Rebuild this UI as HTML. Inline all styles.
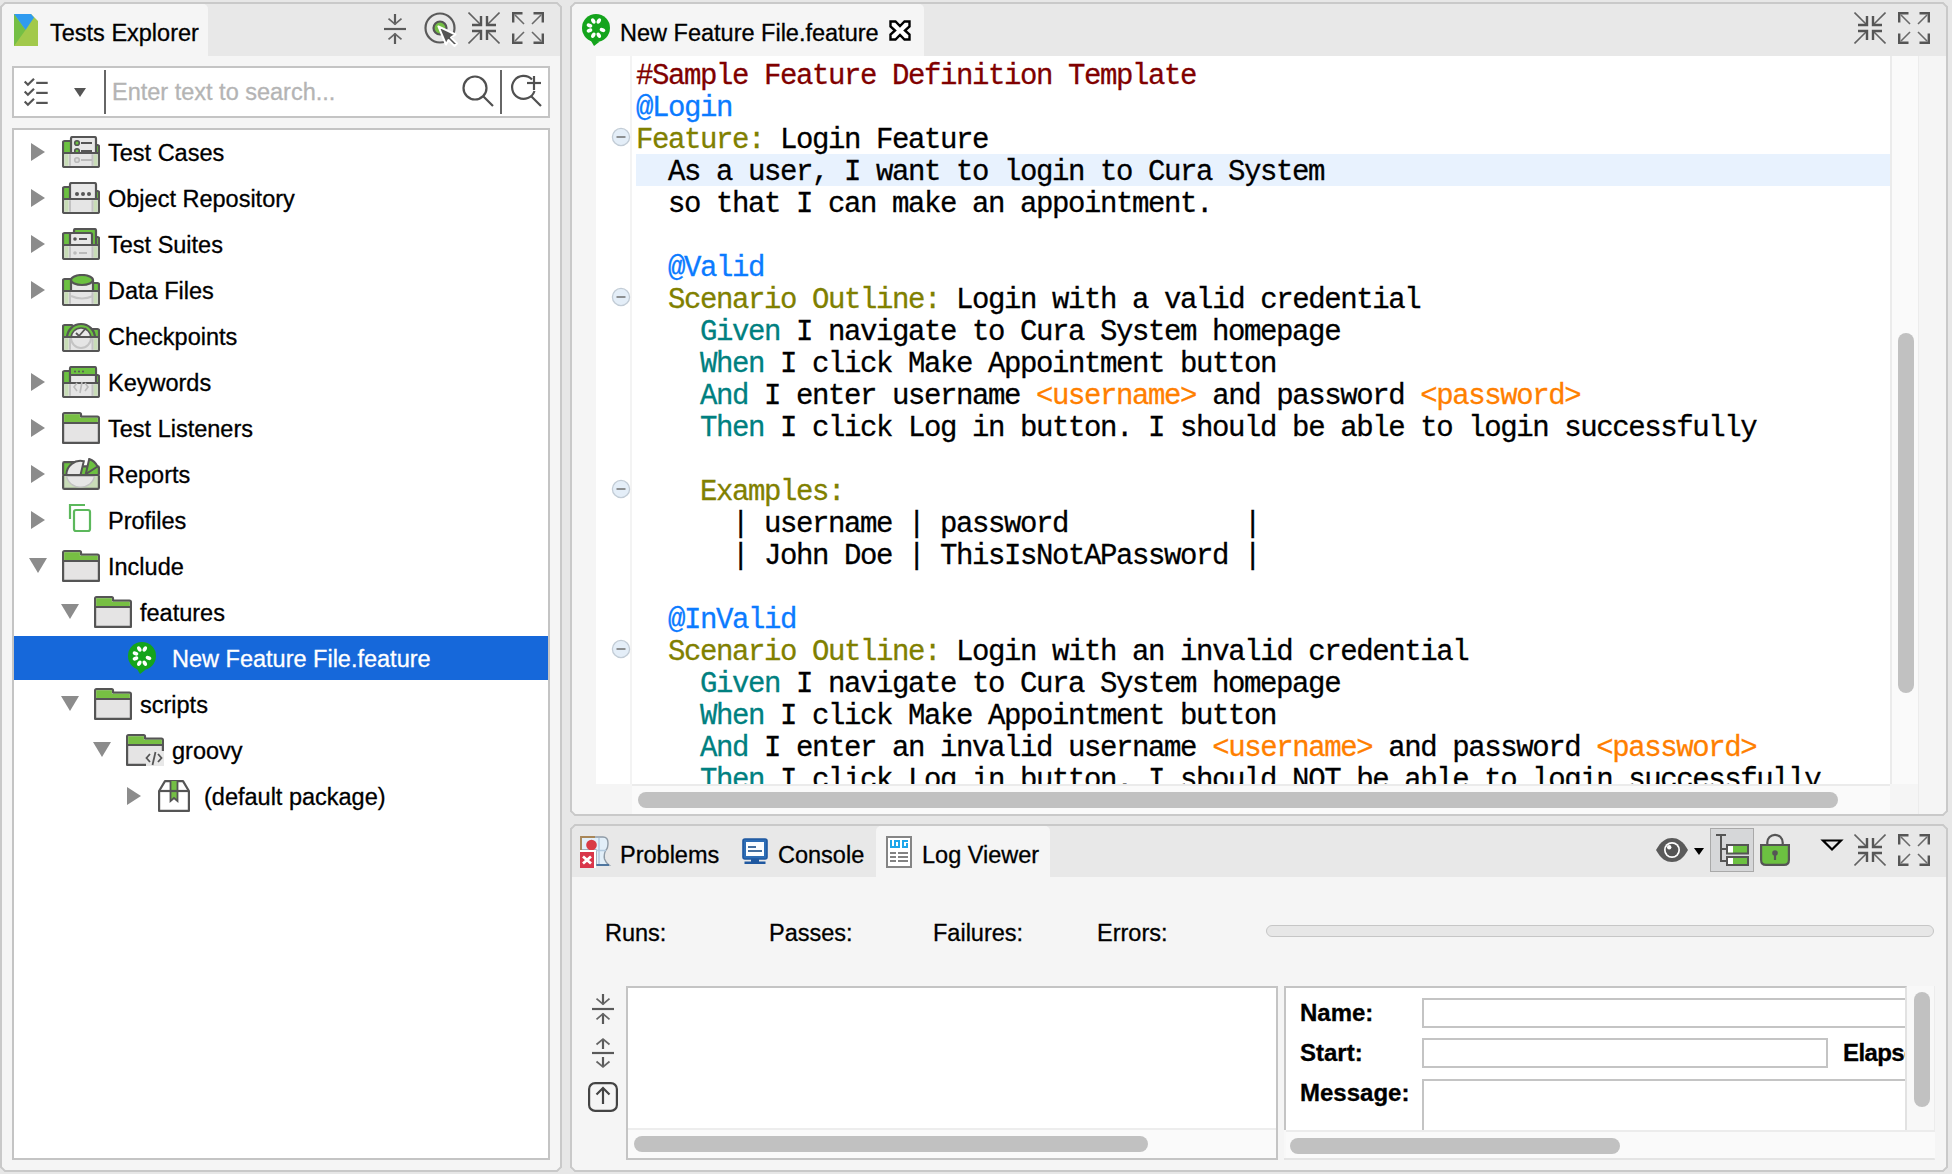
<!DOCTYPE html>
<html><head><meta charset="utf-8">
<style>
*{box-sizing:border-box;margin:0;padding:0}
html,body{width:1952px;height:1174px;overflow:hidden;background:#e7e7e7;font-family:"Liberation Sans",sans-serif;color:#000}
.a{position:absolute}
.panel{position:absolute;border:2px solid #c9c9c9;background:#f5f5f5;border-radius:0;overflow:hidden}
.tabbar{position:absolute;left:0;right:0;top:0;background:#e8e8e8}
.tab{position:absolute;top:0;background:#f5f5f5;border-radius:0 5px 0 0}
.t{position:absolute;font-size:23.5px;line-height:30px;white-space:pre;-webkit-text-stroke:0.3px currentColor}
.box{position:absolute;background:#fff;border:2px solid #c4c4c4}
.row{position:absolute;left:0;right:0;height:46px}
.tri{position:absolute;width:0;height:0}
.code{position:absolute;font-family:"Liberation Mono",monospace;font-size:29px;letter-spacing:-1.4px;line-height:32px;white-space:pre;color:#000;-webkit-text-stroke:0.3px currentColor}
.cm{color:#800000}.tg{color:#0b7bff}.kw{color:#808000}.st{color:#008080}.ph{color:#ff7f00}
svg{position:absolute;overflow:visible}
</style></head><body>

<!-- ============ LEFT PANEL ============ -->
<div class="panel" style="left:0;top:2px;width:562px;height:1170px">
  <div class="tabbar" style="height:52px"></div>
  <div class="tab" style="left:0;width:206px;height:52px"></div>
</div>

<!-- ============ EDITOR PANEL ============ -->
<div class="panel" style="left:570px;top:2px;width:1378px;height:814px">
  <div class="tabbar" style="height:52px"></div>
  <div class="tab" style="left:0;width:352px;height:52px"></div>
</div>

<!-- ============ BOTTOM PANEL ============ -->
<div class="panel" style="left:570px;top:824px;width:1378px;height:348px">
  <div class="tabbar" style="height:51px"></div>
  <div class="tab" style="left:304px;width:174px;height:51px;border-radius:5px 5px 0 0"></div>
</div>


<svg width="0" height="0" style="position:absolute">
<defs>
  <symbol id="minimize" viewBox="0 0 32 32">
    <g fill="none">
      <g stroke-width="1.6" stroke="#626262"><line x1="0.5" y1="0.5" x2="12" y2="12"/><line x1="31.5" y1="0.5" x2="20" y2="12"/><line x1="0.5" y1="31.5" x2="12" y2="20"/><line x1="31.5" y1="31.5" x2="20" y2="20"/></g>
      <g stroke-width="2.4" stroke="#555"><polyline points="4,13 13,13 13,4"/><polyline points="28,13 19,13 19,4"/><polyline points="4,19 13,19 13,28"/><polyline points="28,19 19,19 19,28"/></g>
    </g>
  </symbol>
  <symbol id="maximize" viewBox="0 0 32 32">
    <g fill="none">
      <g stroke-width="1.6" stroke="#6a6a6a"><line x1="3" y1="3" x2="12" y2="12"/><line x1="29" y1="3" x2="20" y2="12"/><line x1="3" y1="29" x2="12" y2="20"/><line x1="29" y1="29" x2="20" y2="20"/></g>
      <g stroke-width="2.4" stroke="#555"><polyline points="1.2,10.5 1.2,1.2 10.5,1.2"/><polyline points="21.5,1.2 30.8,1.2 30.8,10.5"/><polyline points="1.2,21.5 1.2,30.8 10.5,30.8"/><polyline points="21.5,30.8 30.8,30.8 30.8,21.5"/></g>
    </g>
  </symbol>
  <symbol id="drawerback" viewBox="0 0 38 32">
    <rect x="1" y="5" width="10" height="13" rx="1.5" fill="#6cc141" stroke="#555" stroke-width="2.2"/>
    <rect x="28" y="9" width="9" height="9" rx="1.5" fill="#6cc141" stroke="#555" stroke-width="2.2"/>
  </symbol>
  <symbol id="drawerfront" viewBox="0 0 38 32">
    <rect x="1" y="17" width="36" height="14" rx="1.5" fill="#e5e5e5" stroke="#555" stroke-width="2.2"/>
    <rect x="2.5" y="18.2" width="4" height="11.6" fill="#c8ddb6"/><rect x="7" y="18.2" width="2" height="11.6" fill="#c2c2c2"/>
    <rect x="31.5" y="18.2" width="4" height="11.6" fill="#c8ddb6"/><rect x="29.5" y="18.2" width="2" height="11.6" fill="#c2c2c2"/>
  </symbol>
  <symbol id="tc" viewBox="0 0 38 32">
    <use href="#drawerback"/>
    <rect x="9" y="1" width="25" height="17" rx="1.5" fill="#e8e8e8" stroke="#555" stroke-width="2.2"/>
    <circle cx="15" cy="7" r="2.3" fill="#6cc141" stroke="#555" stroke-width="1.6"/><line x1="19" y1="7" x2="30" y2="7" stroke="#555" stroke-width="2"/>
    <circle cx="15" cy="15" r="2.3" fill="#6cc141" stroke="#555" stroke-width="1.6"/><line x1="19" y1="15" x2="30" y2="15" stroke="#555" stroke-width="2"/>
    <use href="#drawerfront"/>
    <circle cx="15" cy="24" r="2.3" fill="#ddd" stroke="#bbb" stroke-width="1.6"/><line x1="19" y1="24" x2="30" y2="24" stroke="#bbb" stroke-width="2"/>
  </symbol>
  <symbol id="or" viewBox="0 0 38 32">
    <use href="#drawerback"/>
    <rect x="8" y="1" width="26" height="17" rx="1.5" fill="#e8e8e8" stroke="#555" stroke-width="2.2"/>
    <circle cx="15" cy="12" r="2" fill="#555"/><circle cx="21" cy="12" r="2" fill="#555"/><circle cx="27" cy="12" r="2" fill="#555"/>
    <use href="#drawerfront"/>
  </symbol>
  <symbol id="ts" viewBox="0 0 38 32">
    <use href="#drawerback"/>
    <rect x="12" y="1" width="22" height="17" rx="1.5" fill="#6cc141" stroke="#555" stroke-width="2.2"/>
    <rect x="8" y="5" width="22" height="13" rx="1.5" fill="#e8e8e8" stroke="#555" stroke-width="2.2"/>
    <circle cx="13" cy="11" r="1.8" fill="#555"/><line x1="17" y1="11" x2="25" y2="11" stroke="#555" stroke-width="2"/>
    <use href="#drawerfront"/>
    <circle cx="13" cy="25" r="1.8" fill="#bbb"/><line x1="17" y1="25" x2="25" y2="25" stroke="#bbb" stroke-width="2"/>
  </symbol>
  <symbol id="df" viewBox="0 0 38 32">
    <use href="#drawerback"/>
    <path d="M9,6 V18 H31 V6" fill="#e8e8e8" stroke="#555" stroke-width="2.2"/>
    <ellipse cx="20" cy="6" rx="11" ry="5" fill="#6cc141" stroke="#555" stroke-width="2.2"/>
    <use href="#drawerfront"/>
    <path d="M9,22 Q20,27 31,22" fill="none" stroke="#c4c4c4" stroke-width="2"/>
  </symbol>
  <symbol id="cp" viewBox="0 0 38 32">
    <use href="#drawerback"/>
    <path d="M5,18 A14,14 0 0 1 33,18 Z" fill="#6cc141" stroke="#555" stroke-width="2.2"/>
    <path d="M9,18 A10,10 0 0 1 29,18 Z" fill="#e8e8e8" stroke="#555" stroke-width="1.5"/>
    <polyline points="14,13 17,16 24,8" fill="none" stroke="#555" stroke-width="1.8"/>
    <use href="#drawerfront"/>
    <path d="M9,18 A10,10 0 0 0 29,18" fill="none" stroke="#c4c4c4" stroke-width="2"/>
  </symbol>
  <symbol id="kw" viewBox="0 0 38 32">
    <use href="#drawerback"/>
    <rect x="8" y="1" width="26" height="17" rx="1.5" fill="#e8e8e8" stroke="#555" stroke-width="2.2"/>
    <rect x="9" y="2" width="24" height="7" fill="#6cc141"/><line x1="8" y1="9" x2="34" y2="9" stroke="#555" stroke-width="2"/>
    <circle cx="13" cy="5.5" r="1" fill="#555"/><circle cx="17" cy="5.5" r="1" fill="#555"/><circle cx="21" cy="5.5" r="1" fill="#555"/>
    <use href="#drawerfront"/>
    <g stroke="#bbb" stroke-width="1.6" fill="none"><polyline points="15,17 12,21 15,25"/><polyline points="23,17 26,21 23,25"/><line x1="20" y1="16" x2="18" y2="27"/></g>
  </symbol>
  <symbol id="folder" viewBox="0 0 38 32">
    <path d="M1.1,30.9 V2.6 Q1.1,1.1 2.6,1.1 H17.6 Q19,1.1 19,2.6 V4.6 H35.4 Q36.9,4.6 36.9,6.1 V30.9 Z" fill="#e5e4e4" stroke="#555" stroke-width="2.2" stroke-linejoin="round"/>
    <path d="M2.2,2.2 H17.9 V5.7 H35.8 V10 H2.2 Z" fill="#77bf43"/>
    <line x1="1.1" y1="11" x2="36.9" y2="11" stroke="#555" stroke-width="2.2"/>
  </symbol>
  <symbol id="gfolder" viewBox="0 0 38 32">
    <use href="#folder"/>
    <rect x="20" y="17" width="18" height="15" fill="#e8e8e8"/>
    <g stroke="#555" stroke-width="1.8" fill="none"><polyline points="24,20 20.5,24 24,28"/><polyline points="32,20 35.5,24 32,28"/><line x1="29.5" y1="18" x2="26.5" y2="31"/></g>
  </symbol>
  <symbol id="rp" viewBox="0 0 38 32">
    <rect x="1.1" y="4.2" width="14" height="13" rx="1.2" fill="#6cc141" stroke="#555" stroke-width="2.2"/>
    <rect x="18" y="8.3" width="18.9" height="8.7" rx="1.2" fill="#6cc141" stroke="#555" stroke-width="2.2"/>
    <path d="M18.5,17 L4.3,17 A14.2,14.2 0 0 1 21.8,3.2 Z" fill="#e8e8e8" stroke="#555" stroke-width="2"/>
    <path d="M23.8,16 L27.2,1 A15,15 0 0 1 35.6,8.5 Z" fill="#6cc141" stroke="#555" stroke-width="2"/>
    <rect x="1.1" y="17" width="35.8" height="13.9" rx="1.2" fill="#c9ddb8" stroke="#555" stroke-width="2.2"/>
    <path d="M4.6,18.2 A14,12.4 0 0 0 32.4,18.2 Z" fill="#e6e6e6" stroke="#c2c2c2" stroke-width="1.4"/>
    <line x1="1.1" y1="17" x2="36.9" y2="17" stroke="#555" stroke-width="2.2"/>
  </symbol>
  <symbol id="pf" viewBox="0 0 38 32">
    <g fill="none" stroke="#5cb85c" stroke-width="2.2"><polyline points="8,15 8,1 23,1"/><rect x="12" y="6" width="16" height="21" rx="2"/></g>
  </symbol>
  <symbol id="cuke" viewBox="0 0 30 34">
    <circle cx="15" cy="14" r="14" fill="#14a41c"/>
    <path d="M9.5,26 L13,32 L18.5,27.8 Z" fill="#14a41c"/>
    <g fill="#fff">
      <ellipse cx="12.3" cy="7" rx="1.9" ry="2.9" transform="rotate(-30 12.3 7)"/>
      <ellipse cx="17.8" cy="7" rx="1.9" ry="2.9" transform="rotate(30 17.8 7)"/>
      <ellipse cx="8.5" cy="11.5" rx="2.9" ry="1.9" transform="rotate(20 8.5 11.5)"/>
      <ellipse cx="8.5" cy="16.5" rx="2.9" ry="1.9" transform="rotate(-20 8.5 16.5)"/>
      <ellipse cx="21.5" cy="16" rx="2.9" ry="1.9" transform="rotate(20 21.5 16)"/>
      <ellipse cx="12.3" cy="21.3" rx="1.9" ry="2.9" transform="rotate(30 12.3 21.3)"/>
      <ellipse cx="17.8" cy="21.3" rx="1.9" ry="2.9" transform="rotate(-30 17.8 21.3)"/>
    </g>
  </symbol>
  <symbol id="pkg" viewBox="0 0 32 32">
    <path d="M1.1,11 L7,1.1 H25 L30.9,11 V30.9 H1.1 Z" fill="none" stroke="#555" stroke-width="2.2" stroke-linejoin="round"/>
    <line x1="1.1" y1="11" x2="30.9" y2="11" stroke="#555" stroke-width="2.2"/>
    <path d="M12.5,1.1 V21 L16,18 L19.5,21 V1.1" fill="#74bf45" stroke="#555" stroke-width="1.8"/>
    <line x1="12.5" y1="11" x2="19.5" y2="11" stroke="#555" stroke-width="2.2"/>
  </symbol>
  <symbol id="fold" viewBox="0 0 20 20">
    <circle cx="10" cy="10" r="8.6" fill="#e4eef8" stroke="#c2ccd6" stroke-width="1.3"/>
    <line x1="5.5" y1="10" x2="14.5" y2="10" stroke="#707070" stroke-width="1.5"/>
  </symbol>
</defs>
</svg>

<!-- left panel content -->
<svg style="left:14px;top:14px" width="24" height="32" viewBox="0 0 24 32">
  <path d="M0,0 H17 L24,7 V32 H0 Z" fill="#a2c94b"/>
  <path d="M0,0 L11.5,16 L0,32 Z" fill="#74bf45"/>
  <path d="M0,0 H17 L20,3.5 L11.5,16 Z" fill="#2f9bf0"/>
</svg>
<div class="t" style="left:50px;top:18px">Tests Explorer</div>
<!-- collapse all -->
<svg style="left:384px;top:14px" width="22" height="30" viewBox="0 0 22 30">
  <g stroke="#5a5a5a" stroke-width="2.2" fill="none" stroke-linecap="butt">
    <line x1="0" y1="15" x2="22" y2="15"/>
    <line x1="11" y1="0" x2="11" y2="10.5"/><polyline points="4.5,4.7 11,10.2 17.5,4.7" stroke-width="1.7" stroke="#656565"/>
    <line x1="11" y1="19.5" x2="11" y2="30"/><polyline points="4.5,25.3 11,19.8 17.5,25.3" stroke-width="1.7" stroke="#656565"/>
  </g>
</svg>
<!-- link with editor -->
<svg style="left:424px;top:12px" width="34" height="34" viewBox="0 0 34 34">
  <circle cx="16" cy="16" r="14.5" fill="none" stroke="#5a5a5a" stroke-width="2.2"/>
  <circle cx="16" cy="16" r="6.5" fill="#74bf45" stroke="#555" stroke-width="2.2"/>
  <path d="M14.4,14.4 L31.5,22.5 L27,25.5 L33,31.5 L30.5,34 L24.5,28 L22,32.5 Z" fill="#555" stroke="#fff" stroke-width="2" stroke-linejoin="round"/>
</svg>
<svg style="left:468px;top:12px" width="32" height="32" viewBox="0 0 32 32"><use href="#minimize"/></svg>
<svg style="left:512px;top:12px" width="32" height="32" viewBox="0 0 32 32"><use href="#maximize"/></svg>

<!-- search box -->
<div class="box" style="left:12px;top:66px;width:538px;height:52px"></div>
<svg style="left:24px;top:78px" width="24" height="28" viewBox="0 0 24 28">
  <g stroke="#555" stroke-width="2.2" fill="none">
    <polyline points="0.7,3.5 3.9,6.8 10,0.7"/><line x1="12.2" y1="4.9" x2="23.7" y2="4.9"/>
    <polyline points="0.7,13.5 3.9,16.8 10,10.7"/><line x1="12.2" y1="14.9" x2="23.7" y2="14.9"/>
    <polyline points="0.7,23.5 3.9,26.8 10,20.7"/><line x1="12.2" y1="24.9" x2="23.7" y2="24.9"/>
  </g>
</svg>
<div class="tri" style="left:74px;top:88px;border-left:6px solid transparent;border-right:6px solid transparent;border-top:9.5px solid #555"></div>
<div class="a" style="left:104px;top:70px;width:2px;height:44px;background:#666"></div>
<div class="t" style="left:112px;top:77px;color:#b4b4b4">Enter text to search...</div>
<svg style="left:462px;top:75px" width="32" height="33" viewBox="0 0 32 33">
  <g stroke="#505050" stroke-width="2.2" fill="none"><circle cx="13" cy="13" r="11.5"/><line x1="21.5" y1="21.5" x2="31" y2="31"/></g>
</svg>
<div class="a" style="left:500px;top:70px;width:2px;height:44px;background:#666"></div>
<svg style="left:510px;top:75px" width="34" height="33" viewBox="0 0 34 33">
  <g stroke="#505050" stroke-width="2.2" fill="none"><path d="M22,4.5 A11.5,11.5 0 1 0 24.5,16"/><line x1="21.5" y1="21.5" x2="31" y2="31"/>
  <line x1="17" y1="8" x2="31" y2="8"/><line x1="24" y1="1" x2="24" y2="15"/></g>
</svg>

<!-- tree -->
<div class="box" style="left:12px;top:128px;width:538px;height:1032px"></div>
<div class="a" style="left:14px;top:636px;width:534px;height:44px;background:#1668da"></div>
<div class="tri" style="left:31px;top:143px;border-top:9px solid transparent;border-bottom:9px solid transparent;border-left:14px solid #8c8c8c"></div>
<svg style="left:62px;top:136px" width="38" height="32" viewBox="0 0 38 32"><use href="#tc"/></svg>
<div class="t" style="left:108px;top:138px;color:#000">Test Cases</div>
<div class="tri" style="left:31px;top:189px;border-top:9px solid transparent;border-bottom:9px solid transparent;border-left:14px solid #8c8c8c"></div>
<svg style="left:62px;top:182px" width="38" height="32" viewBox="0 0 38 32"><use href="#or"/></svg>
<div class="t" style="left:108px;top:184px;color:#000">Object Repository</div>
<div class="tri" style="left:31px;top:235px;border-top:9px solid transparent;border-bottom:9px solid transparent;border-left:14px solid #8c8c8c"></div>
<svg style="left:62px;top:228px" width="38" height="32" viewBox="0 0 38 32"><use href="#ts"/></svg>
<div class="t" style="left:108px;top:230px;color:#000">Test Suites</div>
<div class="tri" style="left:31px;top:281px;border-top:9px solid transparent;border-bottom:9px solid transparent;border-left:14px solid #8c8c8c"></div>
<svg style="left:62px;top:274px" width="38" height="32" viewBox="0 0 38 32"><use href="#df"/></svg>
<div class="t" style="left:108px;top:276px;color:#000">Data Files</div>
<svg style="left:62px;top:320px" width="38" height="32" viewBox="0 0 38 32"><use href="#cp"/></svg>
<div class="t" style="left:108px;top:322px;color:#000">Checkpoints</div>
<div class="tri" style="left:31px;top:373px;border-top:9px solid transparent;border-bottom:9px solid transparent;border-left:14px solid #8c8c8c"></div>
<svg style="left:62px;top:366px" width="38" height="32" viewBox="0 0 38 32"><use href="#kw"/></svg>
<div class="t" style="left:108px;top:368px;color:#000">Keywords</div>
<div class="tri" style="left:31px;top:419px;border-top:9px solid transparent;border-bottom:9px solid transparent;border-left:14px solid #8c8c8c"></div>
<svg style="left:62px;top:412px" width="38" height="32" viewBox="0 0 38 32"><use href="#folder"/></svg>
<div class="t" style="left:108px;top:414px;color:#000">Test Listeners</div>
<div class="tri" style="left:31px;top:465px;border-top:9px solid transparent;border-bottom:9px solid transparent;border-left:14px solid #8c8c8c"></div>
<svg style="left:62px;top:458px" width="38" height="32" viewBox="0 0 38 32"><use href="#rp"/></svg>
<div class="t" style="left:108px;top:460px;color:#000">Reports</div>
<div class="tri" style="left:31px;top:511px;border-top:9px solid transparent;border-bottom:9px solid transparent;border-left:14px solid #8c8c8c"></div>
<svg style="left:62px;top:504px" width="38" height="32" viewBox="0 0 38 32"><use href="#pf"/></svg>
<div class="t" style="left:108px;top:506px;color:#000">Profiles</div>
<div class="tri" style="left:29px;top:558px;border-left:9px solid transparent;border-right:9px solid transparent;border-top:15px solid #8c8c8c"></div>
<svg style="left:62px;top:550px" width="38" height="32" viewBox="0 0 38 32"><use href="#folder"/></svg>
<div class="t" style="left:108px;top:552px;color:#000">Include</div>
<div class="tri" style="left:61px;top:604px;border-left:9px solid transparent;border-right:9px solid transparent;border-top:15px solid #8c8c8c"></div>
<svg style="left:94px;top:596px" width="38" height="32" viewBox="0 0 38 32"><use href="#folder"/></svg>
<div class="t" style="left:140px;top:598px;color:#000">features</div>
<svg style="left:127px;top:642px" width="30" height="34" viewBox="0 0 30 34"><use href="#cuke"/></svg>
<div class="t" style="left:172px;top:644px;color:#fff">New Feature File.feature</div>
<div class="tri" style="left:61px;top:696px;border-left:9px solid transparent;border-right:9px solid transparent;border-top:15px solid #8c8c8c"></div>
<svg style="left:94px;top:688px" width="38" height="32" viewBox="0 0 38 32"><use href="#folder"/></svg>
<div class="t" style="left:140px;top:690px;color:#000">scripts</div>
<div class="tri" style="left:93px;top:742px;border-left:9px solid transparent;border-right:9px solid transparent;border-top:15px solid #8c8c8c"></div>
<svg style="left:126px;top:734px" width="38" height="32" viewBox="0 0 38 32"><use href="#gfolder"/></svg>
<div class="t" style="left:172px;top:736px;color:#000">groovy</div>
<div class="tri" style="left:127px;top:787px;border-top:9px solid transparent;border-bottom:9px solid transparent;border-left:14px solid #8c8c8c"></div>
<svg style="left:158px;top:780px" width="32" height="32" viewBox="0 0 32 32"><use href="#pkg"/></svg>
<div class="t" style="left:204px;top:782px;color:#000">(default package)</div>

<!-- ============ editor content ============ -->
<svg style="left:581px;top:14px" width="30" height="34" viewBox="0 0 30 34"><use href="#cuke"/></svg>
<div class="t" style="left:620px;top:18px">New Feature File.feature</div>
<svg style="left:889px;top:20px" width="22" height="21" viewBox="0 0 22 21">
  <path d="M1.5,1.5 H6.5 L11,6 L15.5,1.5 H20.5 V6.5 L16,10.5 L20.5,14.5 V19.5 H15.5 L11,15 L6.5,19.5 H1.5 V14.5 L6,10.5 L1.5,6.5 Z" fill="#fff" stroke="#000" stroke-width="2.4" stroke-linejoin="miter"/>
</svg>
<svg style="left:1854px;top:12px" width="32" height="32" viewBox="0 0 32 32"><use href="#minimize"/></svg>
<svg style="left:1898px;top:12px" width="32" height="32" viewBox="0 0 32 32"><use href="#maximize"/></svg>

<div class="a" style="left:596px;top:56px;width:1294px;height:728px;background:#fff;overflow:hidden">
  <div class="a" style="left:34px;top:0;width:2px;height:728px;background:#f3f3f3"></div>
  <div class="a" style="left:40px;top:98px;width:1254px;height:32px;background:#e8f2fe"></div>
  <div class="code" id="code" style="left:40px;top:5px"><span class="cm">#Sample Feature Definition Template</span>
<span class="tg">@Login</span>
<span class="kw">Feature:</span> Login Feature
  As a user, I want to login to Cura System
  so that I can make an appointment.

  <span class="tg">@Valid</span>
  <span class="kw">Scenario Outline:</span> Login with a valid credential
    <span class="st">Given</span> I navigate to Cura System homepage
    <span class="st">When</span> I click Make Appointment button
    <span class="st">And</span> I enter username <span class="ph">&lt;username&gt;</span> and password <span class="ph">&lt;password&gt;</span>
    <span class="st">Then</span> I click Log in button. I should be able to login successfully

    <span class="kw">Examples:</span>
      | username | password           |
      | John Doe | ThisIsNotAPassword |

  <span class="tg">@InValid</span>
  <span class="kw">Scenario Outline:</span> Login with an invalid credential
    <span class="st">Given</span> I navigate to Cura System homepage
    <span class="st">When</span> I click Make Appointment button
    <span class="st">And</span> I enter an invalid username <span class="ph">&lt;username&gt;</span> and password <span class="ph">&lt;password&gt;</span>
    <span class="st">Then</span> I click Log in button. I should NOT be able to login successfully</div>
</div>
<svg style="left:611px;top:127px" width="20" height="20" viewBox="0 0 20 20"><use href="#fold"/></svg>
<svg style="left:611px;top:287px" width="20" height="20" viewBox="0 0 20 20"><use href="#fold"/></svg>
<svg style="left:611px;top:479px" width="20" height="20" viewBox="0 0 20 20"><use href="#fold"/></svg>
<svg style="left:611px;top:639px" width="20" height="20" viewBox="0 0 20 20"><use href="#fold"/></svg>
<!-- scrollbars -->
<div class="a" style="left:1890px;top:56px;width:2px;height:728px;background:#ebebeb"></div>
<div class="a" style="left:1892px;top:56px;width:26px;height:728px;background:#fafafa"></div>
<div class="a" style="left:1918px;top:56px;width:1px;height:758px;background:#ececec"></div>
<div class="a" style="left:1898px;top:333px;width:16px;height:360px;background:#c1c1c1;border-radius:8px"></div>
<div class="a" style="left:632px;top:784px;width:1258px;height:30px;background:#fafafa;border-top:2px solid #ebebeb"></div>
<div class="a" style="left:638px;top:792px;width:1200px;height:16px;background:#c1c1c1;border-radius:8px"></div>

<!-- ============ bottom panel content ============ -->
<svg style="left:580px;top:836px" width="30" height="32" viewBox="0 0 30 32">
  <path d="M1,14 V1 H23 Q28,1 28,7 Q28,12 26,14 Q23.5,18 24.5,23 Q26,27 29,29 H16 V14 Z" fill="#e2eff9" stroke="#8f9ba6" stroke-width="1.4"/>
  <path d="M1,14 V1 H15" fill="none" stroke="#a98657" stroke-width="1.8"/>
  <line x1="19" y1="2" x2="19" y2="28" stroke="#b3cbe0" stroke-width="1.5"/>
  <line x1="16" y1="14.5" x2="26" y2="14.5" stroke="#b3cbe0" stroke-width="1.5"/>
  <line x1="16.5" y1="29" x2="29" y2="29" stroke="#3b6a9a" stroke-width="1.6"/>
  <circle cx="11.5" cy="9" r="5.3" fill="#d93b46"/>
  <rect x="0" y="14" width="16" height="18" fill="#fff"/>
  <rect x="0" y="16" width="14" height="16" fill="#d9364a"/>
  <path d="M3,20.5 L11,27.5 M11,20.5 L3,27.5" stroke="#fff" stroke-width="2.8"/>
</svg>
<div class="t" style="left:620px;top:840px">Problems</div>
<svg style="left:742px;top:838px" width="26" height="27" viewBox="0 0 26 27">
  <rect x="1" y="1" width="24" height="20" rx="2" fill="#2d6db5" stroke="#1f58a0" stroke-width="1.6"/>
  <rect x="4" y="4" width="18" height="14" fill="#fbfdff"/>
  <line x1="6" y1="9" x2="14" y2="9" stroke="#2f5f95" stroke-width="1.8"/><line x1="6" y1="13" x2="20" y2="13" stroke="#2f5f95" stroke-width="1.8"/>
  <rect x="9" y="21" width="8" height="3" fill="#1f58a0"/><rect x="2.5" y="23.5" width="21" height="2.5" fill="#1f58a0"/>
</svg>
<div class="t" style="left:778px;top:840px">Console</div>
<svg style="left:886px;top:836px" width="26" height="32" viewBox="0 0 26 32">
  <rect x="1" y="1" width="24" height="30" fill="#fff" stroke="#858585" stroke-width="2"/>
  <g fill="#1ea6ea"><rect x="4" y="4" width="2" height="8"/><rect x="4" y="10" width="4" height="2"/><rect x="8" y="4" width="6" height="8"/><rect x="16" y="4" width="6" height="2"/><rect x="16" y="4" width="2" height="8"/><rect x="16" y="10" width="6" height="2"/><rect x="20" y="7" width="2" height="5"/></g>
  <rect x="10" y="6" width="2" height="4" fill="#fff"/>
  <g fill="#828282"><rect x="4" y="16" width="6" height="2"/><rect x="12" y="16" width="10" height="2"/><rect x="4" y="20" width="6" height="2"/><rect x="12" y="20" width="10" height="2"/><rect x="4" y="24" width="6" height="2"/><rect x="12" y="24" width="10" height="2"/></g>
</svg>
<div class="t" style="left:922px;top:840px">Log Viewer</div>

<!-- toolbar right -->
<svg style="left:1656px;top:838px" width="32" height="24" viewBox="0 0 32 24">
  <path d="M0,12 C5,3 10,0 16,0 C22,0 27,3 32,12 C27,21 22,24 16,24 C10,24 5,21 0,12 Z" fill="#5a5a5a"/>
  <circle cx="16" cy="12" r="8" fill="#fff"/><circle cx="16" cy="12" r="6.3" fill="#555"/><circle cx="13.2" cy="9.2" r="2.2" fill="#fff"/>
</svg>
<div class="tri" style="left:1694px;top:848px;border-left:5px solid transparent;border-right:5px solid transparent;border-top:7.5px solid #000"></div>
<div class="a" style="left:1710px;top:828px;width:44px;height:44px;background:#d6d7d9;border:1.5px solid #a9a9a9"></div>
<svg style="left:1716px;top:834px" width="34" height="32" viewBox="0 0 34 32">
  <g stroke="#555" stroke-width="2" fill="none"><line x1="0" y1="1" x2="10" y2="1"/><polyline points="5,1 5,27 11,27"/><line x1="5" y1="15" x2="11" y2="15"/></g>
  <rect x="11" y="11" width="21" height="8.5" fill="#6cc141" stroke="#555" stroke-width="2"/><rect x="12" y="12" width="5" height="6.5" fill="#fff"/>
  <rect x="11" y="23" width="21" height="8" fill="#6cc141" stroke="#555" stroke-width="2"/><rect x="12" y="24" width="5" height="6" fill="#fff"/>
</svg>
<svg style="left:1760px;top:834px" width="30" height="32" viewBox="0 0 30 32">
  <path d="M7.3,11 V8.5 A7.7,7.7 0 0 1 22.7,8.5 V11" fill="none" stroke="#555" stroke-width="2.2"/>
  <path d="M1.1,11 H28.9 V26 Q28.9,30.9 24,30.9 H6 Q1.1,30.9 1.1,26 Z" fill="#6cc141" stroke="#555" stroke-width="2.2"/>
  <circle cx="15" cy="19" r="2.8" fill="#555"/><line x1="15" y1="20" x2="15" y2="26" stroke="#555" stroke-width="2.2"/>
</svg>
<svg style="left:1822px;top:839px" width="20" height="12" viewBox="0 0 20 12">
  <path d="M1,1.5 H19 L10,10.5 Z" fill="none" stroke="#000" stroke-width="2.2" stroke-linejoin="miter"/>
</svg>
<svg style="left:1854px;top:834px" width="32" height="32" viewBox="0 0 32 32"><use href="#minimize"/></svg>
<svg style="left:1898px;top:834px" width="32" height="32" viewBox="0 0 32 32"><use href="#maximize"/></svg>

<div class="t" style="left:605px;top:918px">Runs:</div>
<div class="t" style="left:769px;top:918px">Passes:</div>
<div class="t" style="left:933px;top:918px">Failures:</div>
<div class="t" style="left:1097px;top:918px">Errors:</div>
<div class="a" style="left:1266px;top:925px;width:668px;height:12px;background:#e7e7e7;border:1.5px solid #c6c6c6;border-radius:6px"></div>

<!-- left side buttons -->
<svg style="left:592px;top:994px" width="22" height="30" viewBox="0 0 22 30">
  <g stroke="#5a5a5a" stroke-width="2.2" fill="none">
    <line x1="0" y1="15" x2="22" y2="15"/>
    <line x1="11" y1="0" x2="11" y2="10.5"/><polyline points="4.5,4.7 11,10.2 17.5,4.7" stroke-width="1.7" stroke="#656565"/>
    <line x1="11" y1="19.5" x2="11" y2="30"/><polyline points="4.5,25.3 11,19.8 17.5,25.3" stroke-width="1.7" stroke="#656565"/>
  </g>
</svg>
<svg style="left:592px;top:1038px" width="22" height="30" viewBox="0 0 22 30">
  <g stroke="#5a5a5a" stroke-width="2.2" fill="none">
    <line x1="0" y1="15" x2="22" y2="15"/>
    <line x1="11" y1="1" x2="11" y2="11"/><polyline points="4.5,6.5 11,1 17.5,6.5" stroke-width="1.7" stroke="#656565"/>
    <line x1="11" y1="19" x2="11" y2="29"/><polyline points="4.5,23.5 11,29 17.5,23.5" stroke-width="1.7" stroke="#656565"/>
  </g>
</svg>
<svg style="left:588px;top:1082px" width="30" height="30" viewBox="0 0 30 30">
  <rect x="1.1" y="1.1" width="27.8" height="27.8" rx="6" fill="none" stroke="#444" stroke-width="2.2"/>
  <g stroke="#444" stroke-width="2.2" fill="none"><line x1="15" y1="6" x2="15" y2="22"/><polyline points="8.5,12.5 15,6 21.5,12.5"/></g>
</svg>

<!-- left box -->
<div class="box" style="left:626px;top:986px;width:652px;height:174px"></div>
<div class="a" style="left:628px;top:1128px;width:648px;height:30px;background:#fafafa;border-top:2px solid #ededed"></div>
<div class="a" style="left:634px;top:1136px;width:514px;height:16px;background:#c1c1c1;border-radius:8px"></div>

<!-- right box -->
<div class="a" style="left:1284px;top:986px;width:651px;height:174px;background:#f8f8f8;border-bottom:2px solid #e4e4e4;border-right:1px solid #ececec"></div>
<div class="a" style="left:1284px;top:986px;width:2px;height:144px;background:#c4c4c4"></div>
<div class="a" style="left:1286px;top:986px;width:621px;height:144px;background:#fff;border-top:2px solid #c4c4c4;border-right:2px solid #e2e2e2"></div>
<div class="a" style="left:1286px;top:1130px;width:649px;height:28px;background:#fafafa;border-top:2px solid #ececec"></div>
<div class="a" style="left:1290px;top:1138px;width:330px;height:16px;background:#c1c1c1;border-radius:8px"></div>
<div class="a" style="left:1914px;top:992px;width:16px;height:115px;background:#c1c1c1;border-radius:8px"></div>
<div class="a" style="left:1286px;top:988px;width:619px;height:142px;overflow:hidden">
  <div class="t" style="left:14px;top:10px;font-weight:bold;font-size:24px">Name:</div>
  <div class="t" style="left:14px;top:50px;font-weight:bold;font-size:24px">Start:</div>
  <div class="t" style="left:14px;top:90px;font-weight:bold;font-size:24px">Message:</div>
  <div class="t" style="left:557px;top:50px;font-weight:bold;font-size:24px;letter-spacing:-0.6px">Elapsed:</div>
  <div class="a" style="left:136px;top:10px;width:600px;height:30px;border:2px solid #c4c4c4"></div>
  <div class="a" style="left:136px;top:50px;width:406px;height:30px;border:2px solid #c4c4c4"></div>
  <div class="a" style="left:136px;top:91px;width:600px;height:100px;border:2px solid #c4c4c4"></div>
</div>

<!-- chamfer corners -->
<svg style="left:0px;top:2px" width="6" height="6" viewBox="0 0 6 6"><g transform="rotate(0 3 3)"><path d="M0,0 H5 L0,5 Z" fill="#e7e7e7"/><line x1="0.6" y1="5.4" x2="5.4" y2="0.6" stroke="#c9c9c9" stroke-width="2"/></g></svg>
<svg style="left:556px;top:2px" width="6" height="6" viewBox="0 0 6 6"><g transform="rotate(90 3 3)"><path d="M0,0 H5 L0,5 Z" fill="#e7e7e7"/><line x1="0.6" y1="5.4" x2="5.4" y2="0.6" stroke="#c9c9c9" stroke-width="2"/></g></svg>
<svg style="left:556px;top:1166px" width="6" height="6" viewBox="0 0 6 6"><g transform="rotate(180 3 3)"><path d="M0,0 H5 L0,5 Z" fill="#e7e7e7"/><line x1="0.6" y1="5.4" x2="5.4" y2="0.6" stroke="#c9c9c9" stroke-width="2"/></g></svg>
<svg style="left:0px;top:1166px" width="6" height="6" viewBox="0 0 6 6"><g transform="rotate(270 3 3)"><path d="M0,0 H5 L0,5 Z" fill="#e7e7e7"/><line x1="0.6" y1="5.4" x2="5.4" y2="0.6" stroke="#c9c9c9" stroke-width="2"/></g></svg>
<svg style="left:570px;top:2px" width="6" height="6" viewBox="0 0 6 6"><g transform="rotate(0 3 3)"><path d="M0,0 H5 L0,5 Z" fill="#e7e7e7"/><line x1="0.6" y1="5.4" x2="5.4" y2="0.6" stroke="#c9c9c9" stroke-width="2"/></g></svg>
<svg style="left:1942px;top:2px" width="6" height="6" viewBox="0 0 6 6"><g transform="rotate(90 3 3)"><path d="M0,0 H5 L0,5 Z" fill="#e7e7e7"/><line x1="0.6" y1="5.4" x2="5.4" y2="0.6" stroke="#c9c9c9" stroke-width="2"/></g></svg>
<svg style="left:1942px;top:810px" width="6" height="6" viewBox="0 0 6 6"><g transform="rotate(180 3 3)"><path d="M0,0 H5 L0,5 Z" fill="#e7e7e7"/><line x1="0.6" y1="5.4" x2="5.4" y2="0.6" stroke="#c9c9c9" stroke-width="2"/></g></svg>
<svg style="left:570px;top:810px" width="6" height="6" viewBox="0 0 6 6"><g transform="rotate(270 3 3)"><path d="M0,0 H5 L0,5 Z" fill="#e7e7e7"/><line x1="0.6" y1="5.4" x2="5.4" y2="0.6" stroke="#c9c9c9" stroke-width="2"/></g></svg>
<svg style="left:570px;top:824px" width="6" height="6" viewBox="0 0 6 6"><g transform="rotate(0 3 3)"><path d="M0,0 H5 L0,5 Z" fill="#e7e7e7"/><line x1="0.6" y1="5.4" x2="5.4" y2="0.6" stroke="#c9c9c9" stroke-width="2"/></g></svg>
<svg style="left:1942px;top:824px" width="6" height="6" viewBox="0 0 6 6"><g transform="rotate(90 3 3)"><path d="M0,0 H5 L0,5 Z" fill="#e7e7e7"/><line x1="0.6" y1="5.4" x2="5.4" y2="0.6" stroke="#c9c9c9" stroke-width="2"/></g></svg>
<svg style="left:1942px;top:1166px" width="6" height="6" viewBox="0 0 6 6"><g transform="rotate(180 3 3)"><path d="M0,0 H5 L0,5 Z" fill="#e7e7e7"/><line x1="0.6" y1="5.4" x2="5.4" y2="0.6" stroke="#c9c9c9" stroke-width="2"/></g></svg>
<svg style="left:570px;top:1166px" width="6" height="6" viewBox="0 0 6 6"><g transform="rotate(270 3 3)"><path d="M0,0 H5 L0,5 Z" fill="#e7e7e7"/><line x1="0.6" y1="5.4" x2="5.4" y2="0.6" stroke="#c9c9c9" stroke-width="2"/></g></svg>
</body></html>
